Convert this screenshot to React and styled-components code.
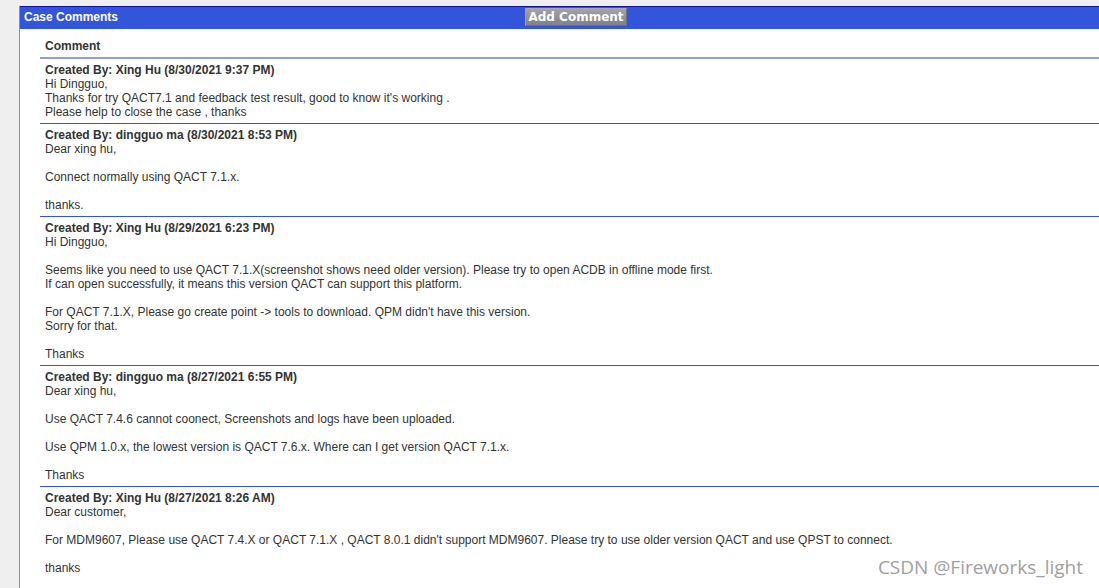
import React from "react";
import styled, { createGlobalStyle } from "styled-components";

const GlobalStyle = createGlobalStyle`
  html, body {
    margin: 0;
    padding: 0;
    background: #efefef;
    overflow: hidden;
  }
  body {
    font-family: "Liberation Sans", Arial, sans-serif;
  }
`;

const Page = styled.div`
  position: relative;
  height: 588px;
  padding: 6px 0 0 19px;
  box-sizing: border-box;
  overflow: hidden;
`;

const Panel = styled.div`
  background: #fff;
  border-left: 1px solid #7b8bd6;
  height: 100%;
`;

const TitleBar = styled.div`
  display: flex;
  align-items: center;
  height: 22px;
  border-top: 1px solid #0a10a8;
  background: #3355d9;
  color: #fff;
`;

const Title = styled.div`
  width: 501px;
  padding: 0 0 2px 4px;
  font-size: 12px;
  font-weight: bold;
`;

const AddButton = styled.button`
  height: 18px;
  width: 102px;
  margin-top: -2px;
  padding: 0;
  border: 1px solid #6f7076;
  border-top-color: #a8a9b0;
  border-left-color: #a8a9b0;
  background: linear-gradient(#a3a4ab, #7f8089);
  color: #fff;
  font-family: "DejaVu Sans", Verdana, sans-serif;
  font-size: 12px;
  font-weight: bold;
  line-height: 16px;
  cursor: pointer;
`;

const Table = styled.div`
  margin-left: 20px;
  padding-top: 10px;
  color: #333;
  font-size: 12px;
  line-height: 14px;
`;

const HeadRow = styled.div`
  padding: 0 5px 4px;
  font-weight: bold;
  border-bottom: 2px solid #8c9fd8;
`;

const Entry = styled.div`
  padding: 4px 5px 4px;
  border-bottom: 1px solid #3355d9;
`;

const Author = styled.div`
  font-weight: bold;
`;

const Line = styled.div`
  min-height: 14px;
  white-space: pre;
`;

const Watermark = styled.div`
  position: absolute;
  right: 16px;
  bottom: 8px;
  font-family: "Open Sans", sans-serif;
  font-size: 19px;
  color: #a0a0a0;
`;

const comments = [
  {
    by: "Xing Hu (8/30/2021 9:37 PM)",
    lines: [
      "Hi Dingguo,",
      "Thanks for try QACT7.1 and feedback test result, good to know it's working .",
      "Please help to close the case , thanks",
    ],
  },
  {
    by: "dingguo ma (8/30/2021 8:53 PM)",
    lines: ["Dear xing hu,", "", "Connect normally using QACT 7.1.x.", "", "thanks."],
  },
  {
    by: "Xing Hu (8/29/2021 6:23 PM)",
    lines: [
      "Hi Dingguo,",
      "",
      "Seems like you need to use QACT 7.1.X(screenshot shows need older version). Please try to open ACDB in offline mode first.",
      "If can open successfully, it means this version QACT can support this platform.",
      "",
      "For QACT 7.1.X, Please go create point -> tools to download. QPM didn't have this version.",
      "Sorry for that.",
      "",
      "Thanks",
    ],
  },
  {
    by: "dingguo ma (8/27/2021 6:55 PM)",
    lines: [
      "Dear xing hu,",
      "",
      "Use QACT 7.4.6 cannot coonect, Screenshots and logs have been uploaded.",
      "",
      "Use QPM 1.0.x, the lowest version is QACT 7.6.x. Where can I get version QACT 7.1.x.",
      "",
      "Thanks",
    ],
  },
  {
    by: "Xing Hu (8/27/2021 8:26 AM)",
    lines: [
      "Dear customer,",
      "",
      "For MDM9607, Please use QACT 7.4.X or QACT 7.1.X , QACT 8.0.1 didn't support MDM9607. Please try to use older version QACT and use QPST to connect.",
      "",
      "thanks",
      "",
      "",
    ],
  },
];

const App = () => (
  <>
    <GlobalStyle />
    <Page>
      <Panel>
        <TitleBar>
          <Title>Case Comments</Title>
          <AddButton>Add Comment</AddButton>
        </TitleBar>
        <Table>
          <HeadRow>Comment</HeadRow>
          {comments.map((c) => (
            <Entry key={c.by}>
              <Author>Created By: {c.by}</Author>
              {c.lines.map((l, i) => (
                <Line key={i}>{l}</Line>
              ))}
            </Entry>
          ))}
        </Table>
      </Panel>
      <Watermark>CSDN @Fireworks_light</Watermark>
    </Page>
  </>
);

export default App;
